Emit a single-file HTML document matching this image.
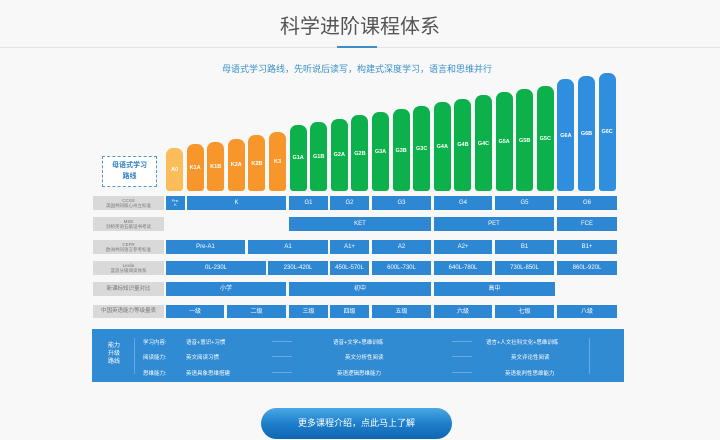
<!DOCTYPE html>
<html><head><meta charset="utf-8"><style>
*{margin:0;padding:0;box-sizing:border-box}
body{width:720px;height:440px;background:#f8f8f8;position:relative;overflow:hidden;font-family:"Liberation Sans","Noto Sans CJK SC",sans-serif}
.a{position:absolute}
.bar{position:absolute;width:17px;border-radius:7px 7px 3px 3px;color:#fff;font-size:5.5px;font-weight:bold;text-align:center}
.bar span{position:absolute;left:0;right:0}
.c{position:absolute;background:#2d87d2;color:#fff;font-size:6px;text-align:center;display:flex;align-items:center;justify-content:center;line-height:1}
.l{position:absolute;left:93px;width:71px;background:#d9d9d9;color:#777;font-size:4.5px;text-align:center;display:flex;flex-direction:column;align-items:center;justify-content:center;line-height:1.2}
.t{position:absolute;color:#fff;font-size:5.5px;white-space:nowrap}
</style></head><body>
<div class="a" style="left:0;top:10px;width:720px;text-align:center;font-size:20px;color:#555">科学进阶课程体系</div>
<div class="a" style="left:0;top:47px;width:720px;height:1px;background:#e2e2e2"></div>
<div class="a" style="left:337px;top:46px;width:40px;height:2px;background:#3b8ec6"></div>
<div class="a" style="left:0;top:62px;width:714px;text-align:center;font-size:9px;color:#3a8fc7">母语式学习路线，先听说后读写，构建式深度学习，语言和思维并行</div>
<div class="a" style="left:102px;top:156px;width:55px;height:31px;border:1.5px dashed #4a9bd6;background:#fff;color:#2d7fc4;font-size:7px;font-weight:bold;text-align:center;line-height:11px;padding-top:3px">母语式学习<br>路线</div>
<div id="bars"></div>
<script>
var n=["A0","K1A","K1B","K2A","K2B","K3","G1A","G1B","G2A","G2B","G3A","G3B","G3C","G4A","G4B","G4C","G5A","G5B","G5C","G6A","G6B","G6C"];
var t=[148,144,142,138.5,135,131.6,124.7,122,118.5,115,111.6,109,105.5,102,98.6,95,92.4,89,86,79,76,72.7];
var h="";
for(var i=0;i<22;i++){var c=i==0?"#fbbd59":i<6?"#f7962a":i<19?"#0db14b":"#2f8ede";var x=166+i*20.6;var ly=0.5*t[i]+96-t[i]-3;
h+='<div class="bar" style="left:'+x+'px;top:'+t[i]+'px;height:'+(191-t[i])+'px;background:'+c+'"><span style="top:'+ly+'px">'+n[i]+'</span></div>';}
document.getElementById("bars").innerHTML=h;
</script>
<div class="l" style="top:196px;height:14px"><div>CCSS</div><div>美国共同核心州立标准</div></div>
<div class="l" style="top:217px;height:14px"><div>MSE</div><div>剑桥英语五级证书考试</div></div>
<div class="l" style="top:240px;height:14px"><div>CEFR</div><div>欧洲共同语言参考标准</div></div>
<div class="l" style="top:261px;height:14px"><div>Lexile</div><div>蓝思分级阅读体系</div></div>
<div class="l" style="top:282px;height:14px;font-size:5.5px">新课标知识量对比</div>
<div class="l" style="top:305px;height:13px;font-size:5.5px">中国英语能力等级量表</div>

<div class="c" style="left:166px;top:196px;width:19px;height:14px;font-size:4px">Pre-<br>K</div>
<div class="c" style="left:187px;top:196px;width:99px;height:14px">K</div>
<div class="c" style="left:289px;top:196px;width:39px;height:14px">G1</div>
<div class="c" style="left:330px;top:196px;width:39px;height:14px">G2</div>
<div class="c" style="left:372px;top:196px;width:59px;height:14px">G3</div>
<div class="c" style="left:434px;top:196px;width:58px;height:14px">G4</div>
<div class="c" style="left:495px;top:196px;width:59px;height:14px">G5</div>
<div class="c" style="left:557px;top:196px;width:60px;height:14px">G6</div>

<div class="c" style="left:289px;top:217px;width:142px;height:14px">KET</div>
<div class="c" style="left:434px;top:217px;width:120px;height:14px">PET</div>
<div class="c" style="left:557px;top:217px;width:60px;height:14px">FCE</div>

<div class="c" style="left:166px;top:240px;width:79px;height:14px">Pre-A1</div>
<div class="c" style="left:248px;top:240px;width:80px;height:14px">A1</div>
<div class="c" style="left:330px;top:240px;width:39px;height:14px">A1+</div>
<div class="c" style="left:372px;top:240px;width:59px;height:14px">A2</div>
<div class="c" style="left:434px;top:240px;width:58px;height:14px">A2+</div>
<div class="c" style="left:495px;top:240px;width:59px;height:14px">B1</div>
<div class="c" style="left:557px;top:240px;width:60px;height:14px">B1+</div>

<div class="c" style="left:166px;top:261px;width:100px;height:14px">0L-230L</div>
<div class="c" style="left:268px;top:261px;width:60px;height:14px">230L-420L</div>
<div class="c" style="left:330px;top:261px;width:39px;height:14px">450L-570L</div>
<div class="c" style="left:372px;top:261px;width:59px;height:14px">600L-730L</div>
<div class="c" style="left:434px;top:261px;width:58px;height:14px">640L-780L</div>
<div class="c" style="left:495px;top:261px;width:59px;height:14px">730L-850L</div>
<div class="c" style="left:557px;top:261px;width:60px;height:14px">860L-920L</div>

<div class="c" style="left:166px;top:282px;width:120px;height:14px">小学</div>
<div class="c" style="left:289px;top:282px;width:142px;height:14px">初中</div>
<div class="c" style="left:434px;top:282px;width:121px;height:14px">高中</div>

<div class="c" style="left:166px;top:305px;width:58px;height:13px">一级</div>
<div class="c" style="left:227px;top:305px;width:59px;height:13px">二级</div>
<div class="c" style="left:289px;top:305px;width:39px;height:13px">三级</div>
<div class="c" style="left:330px;top:305px;width:39px;height:13px">四级</div>
<div class="c" style="left:372px;top:305px;width:59px;height:13px">五级</div>
<div class="c" style="left:434px;top:305px;width:58px;height:13px">六级</div>
<div class="c" style="left:495px;top:305px;width:59px;height:13px">七级</div>
<div class="c" style="left:557px;top:305px;width:60px;height:13px">八级</div>

<div class="a" style="left:92px;top:329px;width:532px;height:53px;background:#318bd3"></div>
<div class="t" style="left:108px;top:342px;font-size:6px;line-height:8px;text-align:center;white-space:normal;width:12px">能力升级路线</div>
<div class="a" style="left:134px;top:338px;width:1px;height:36px;background:#6aaae0"></div>
<div class="a" style="left:589px;top:338px;width:1px;height:36px;background:#6aaae0"></div>
<div class="t" style="left:143px;top:338px">学习内容:</div>
<div class="t" style="left:143px;top:353px">阅读能力:</div>
<div class="t" style="left:143px;top:369px">思维能力:</div>
<div class="t" style="left:186px;top:338px">语音+意识+习惯</div>
<div class="t" style="left:186px;top:353px">英文阅读习惯</div>
<div class="t" style="left:186px;top:369px">英语具象思维搭建</div>
<div class="t" style="left:333px;top:338px">语音+文学+思维训练</div>
<div class="t" style="left:345px;top:353px">英文分析性阅读</div>
<div class="t" style="left:337px;top:369px">英语逻辑思维能力</div>
<div class="t" style="left:486px;top:338px">语言+人文社科文化+思维训练</div>
<div class="t" style="left:511px;top:353px">英文评论性阅读</div>
<div class="t" style="left:505px;top:369px">英语批判性思维能力</div>
<div class="a" style="left:272px;top:341px;width:20px;height:1px;background:#6aaae0"></div>
<div class="a" style="left:272px;top:356px;width:20px;height:1px;background:#6aaae0"></div>
<div class="a" style="left:272px;top:372px;width:20px;height:1px;background:#6aaae0"></div>
<div class="a" style="left:452px;top:341px;width:20px;height:1px;background:#6aaae0"></div>
<div class="a" style="left:452px;top:356px;width:20px;height:1px;background:#6aaae0"></div>
<div class="a" style="left:452px;top:372px;width:20px;height:1px;background:#6aaae0"></div>

<div class="a" style="left:261px;top:408px;width:191px;height:31px;border-radius:16px;background:linear-gradient(180deg,#49a8e6 0%,#1f7fcb 50%,#0f66b3 100%);color:#fff;font-size:9px;text-align:center;line-height:31px">更多课程介绍，点此马上了解</div>
</body></html>
